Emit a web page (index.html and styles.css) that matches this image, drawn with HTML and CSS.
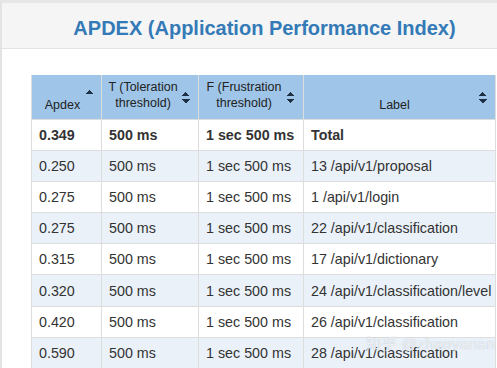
FILE: index.html
```html
<!DOCTYPE html>
<html lang="en">
<head>
    <meta charset="UTF-8">
    <title>APDEX</title>
    <link rel="stylesheet" href="styles.css">
</head>
<body>

<div class="page">
    <header class="title-bar">
        <h1>APDEX (Application Performance Index)</h1>
    </header>

    <div class="content">
        <table class="apdex">
            <thead>
                <tr>
                    <th class="c-apdex sort-asc">Apdex</th>
                    <th class="c-t sortable">T (Toleration<br>threshold)</th>
                    <th class="c-f sortable">F (Frustration<br>threshold)</th>
                    <th class="c-label sortable">Label</th>
                </tr>
            </thead>
            <tbody>
                <tr class="total">
                    <td>0.349</td><td>500 ms</td><td>1 sec 500 ms</td><td>Total</td>
                </tr>
                <tr><td>0.250</td><td>500 ms</td><td>1 sec 500 ms</td><td>13 /api/v1/proposal</td></tr>
                <tr><td>0.275</td><td>500 ms</td><td>1 sec 500 ms</td><td>1 /api/v1/login</td></tr>
                <tr><td>0.275</td><td>500 ms</td><td>1 sec 500 ms</td><td>22 /api/v1/classification</td></tr>
                <tr><td>0.315</td><td>500 ms</td><td>1 sec 500 ms</td><td>17 /api/v1/dictionary</td></tr>
                <tr><td>0.320</td><td>500 ms</td><td>1 sec 500 ms</td><td>24 /api/v1/classification/level</td></tr>
                <tr><td>0.420</td><td>500 ms</td><td>1 sec 500 ms</td><td>26 /api/v1/classification</td></tr>
                <tr><td>0.590</td><td>500 ms</td><td>1 sec 500 ms</td><td>28 /api/v1/classification</td></tr>
            </tbody>
        </table>
    </div>
</div>

<div class="watermark">知乎 @zhaoyanan</div>

</body>
</html>
```

FILE: styles.css
```css
/* Reset */
* {
    margin: 0;
    padding: 0;
    box-sizing: border-box;
}
body {
    font-family: Arial, 'Liberation Sans', 'Noto Sans CJK SC', sans-serif;
    background: #fff;
    color: #333;
    overflow: hidden;
}
.page {
    border-left: 2px solid #e3e3e3;
    border-top: 3px solid #e6e6e6;
    min-height: 368px;
}
/* Title */
.title-bar {
    background: #f5f5f5;
    border-bottom: 1px solid #e3e3e3;
    height: 46px;
    display: flex;
    align-items: center;
    justify-content: center;
    padding-left: 30px;
}
.title-bar h1 {
    color: #337ab7;
    font-size: 20px;
    font-weight: bold;
    padding-top: 5px;
}
/* Table */
.content {
    padding: 26px 0 0 29px;
}
.apdex {
    border-collapse: collapse;
    table-layout: fixed;
    width: 464px;
    font-size: 14.3px;
    border-right: 1px solid #ddd;
}
.apdex th {
    background: #9fc5e8;
    color: #222;
    font-size: 12.5px;
    font-weight: normal;
    line-height: 16px;
    height: 44px;
    padding: 0 16px 8px 6px;
    vertical-align: bottom;
    text-align: center;
    border-left: 1px solid #ddd;
    position: relative;
    white-space: nowrap;
}
.apdex th.c-apdex { width: 70px; padding-bottom: 6px; padding-right: 14px; }
.apdex th.c-t { width: 97px; padding-left: 2px; }
.apdex th.c-f { width: 105px; padding-left: 2px; }
.apdex th.c-label { width: 192px; padding-bottom: 6px; }
.apdex th.sortable::after {
    content: '';
    position: absolute;
    right: 8px;
    top: 17px;
    width: 8px;
    height: 11px;
    background:
        linear-gradient(to bottom right, transparent 50%, #1f3044 50%) left top / 4px 4px no-repeat,
        linear-gradient(to bottom left, transparent 50%, #1f3044 50%) right top / 4px 4px no-repeat,
        linear-gradient(to top right, transparent 50%, #1f3044 50%) left bottom / 4px 4px no-repeat,
        linear-gradient(to top left, transparent 50%, #1f3044 50%) right bottom / 4px 4px no-repeat;
}
.apdex th.sort-asc::after {
    content: '';
    position: absolute;
    right: 7px;
    top: 15px;
    width: 8px;
    height: 4px;
    background:
        linear-gradient(to bottom right, transparent 50%, #1f3044 50%) left top / 4px 4px no-repeat,
        linear-gradient(to bottom left, transparent 50%, #1f3044 50%) right top / 4px 4px no-repeat;
}
.apdex td {
    height: 31.2px;
    padding: 0 7px;
    border: 1px solid #ddd;
    border-right: none;
    white-space: nowrap;
    overflow: hidden;
}
.apdex tbody tr:nth-child(even) td {
    background: #eaf1f9;
}
.apdex tr.total td {
    font-weight: bold;
}
/* Watermark */
.watermark {
    position: absolute;
    left: 366px;
    top: 332px;
    color: rgba(255, 255, 255, 0.75);
    text-shadow: 0 0 1px rgba(120, 130, 150, 0.5);
    font-size: 15px;
    letter-spacing: 0.5px;
}
```
